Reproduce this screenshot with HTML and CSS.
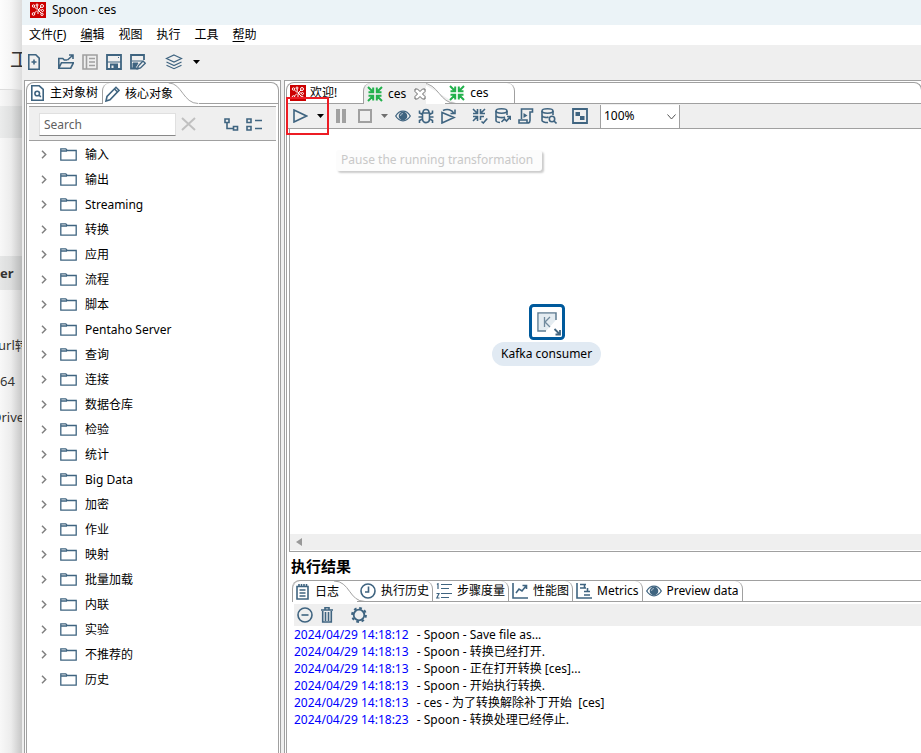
FILE: index.html
```html
<!DOCTYPE html>
<html lang="zh-CN">
<head>
  <meta charset="UTF-8">
  <meta name="viewport" content="width=device-width, initial-scale=1.0">
  <title>Spoon - ces</title>
  <link rel="stylesheet" href="styles.css">
</head>
<body>
  <!-- shared icons -->
  <svg class="sprite" aria-hidden="true">
    <symbol id="i-logo" viewBox="0 0 16 16">
      <rect width="16" height="16" fill="#cc0000"/>
      <g fill="none" stroke="#fff" stroke-width="1">
        <circle cx="3.5" cy="4" r="1.2"/><circle cx="7" cy="3" r="1"/><circle cx="12" cy="4" r="1.5"/>
        <circle cx="3.5" cy="12" r="1.3"/><circle cx="12.5" cy="8.5" r="1"/><circle cx="12" cy="12.3" r="1.2"/>
        <path d="M4.500 5L7 7.500M11 5L8 8M4.500 11L7 8.500M11.300 11.300L8 8M7.200 4v3.500M8.500 8h3M8 9v3"/>
      </g>
    </symbol>
    <symbol id="i-folder" viewBox="0 0 17 13">
      <path d="M.8 12.2V.8h5l1.5 1.700h8.900v9.700zM1 3h6" fill="none" stroke="#3f6480" stroke-width="1.3"/>
    </symbol>
    <symbol id="i-chevron" viewBox="0 0 6 9">
      <path d="M1 .8L4.7 4.5L1 8.2" fill="none" stroke="#808080" stroke-width="1.5"/>
    </symbol>
    <symbol id="i-caret" viewBox="0 0 7 4"><path d="M0 0h7L3.5 4z" fill="currentColor"/></symbol>
    <symbol id="i-arrows" viewBox="0 0 16 16">
      <path d="M1 1l5 5M15 1l-5 5M1 15l5-5M15 15l-5-5M6.2 1.5v4.7H1.5M9.8 1.5v4.7h4.7M6.2 14.5V9.8H1.5M9.8 14.5V9.8h4.7" fill="none" stroke="currentColor" stroke-width="2"/>
    </symbol>
    <symbol id="i-eye" viewBox="0 0 16 12">
      <path d="M.7 6C4.500-.4 11.500-.4 15.300 6C11.500 12.400 4.500 12.400 .7 6z" fill="none" stroke="#3f6480" stroke-width="1.3"/>
      <circle cx="8" cy="6" r="4.300" fill="#3f6480"/><path d="M5.500 6A2.500 2.500 0 0 1 8 3.500" fill="none" stroke="#a9bac8"/>
    </symbol>
  </svg>

  <div class="desktop">
    <aside class="backdrop">
      <div class="bd-title">工</div>
      <div class="bd-band"></div>
      <div class="bd-head">er</div>
      <div class="bd-line shift">url转</div>
      <div class="bd-line">64</div>
      <div class="bd-line shift-more">Drive</div>
    </aside>

    <div class="window">
      <header class="titlebar">
        <svg width="16" height="16"><use href="#i-logo"/></svg>
        <span>Spoon - ces</span>
      </header>

      <nav class="menubar">
        <button>文件(<u>F</u>)</button>
        <button><u>编</u>辑</button>
        <button>视图</button>
        <button>执行</button>
        <button>工具</button>
        <button><u>帮</u>助</button>
      </nav>

      <div class="toolbar main-tools">
        <button aria-label="New"><svg width="12" height="16" viewBox="0 0 12 16" class="line"><path d="M.8.800h7l3.400 3.400v11H.8zM6 5.500v5M3.500 8h5"/></svg></button>
        <button class="wide" aria-label="Open"><svg width="16" height="16" viewBox="0 0 16 16" class="line"><path d="M.8 14.200V4.500h4l1.500 1.500h3M.8 14.200L3.500 8.700h12l-2.800 5.500zM9.500 6l5-4.500M11 1h4v4"/></svg></button>
        <button aria-label="Explore"><svg width="16" height="16" viewBox="0 0 16 16" class="line off"><path d="M1 1h14v14H1zM4.500 1v14M7 4.500h6M7 8h6M7 11.500h6"/></svg></button>
        <button aria-label="Save"><svg width="16" height="16" viewBox="0 0 16 16"><path d="M1 1h14v14H1z" fill="none" stroke="#3f6480" stroke-width="1.800"/><path d="M4 9.500h8V15H4z" fill="#3f6480"/><path d="M5.500 11.500h2V14h-2z" fill="#efefef"/><path d="M1 8h14M12 3.500h1" stroke="#3f6480"/></svg></button>
        <button aria-label="Save as"><svg width="16" height="16" viewBox="0 0 16 16"><path d="M7 14.500H1V1h13v5" fill="none" stroke="#3f6480" stroke-width="1.800"/><path d="M3 9h5l-3 5H3zM2 7h10" fill="#3f6480" stroke="#3f6480"/><path d="M7.500 15l.7-3L13 7l2.300 2.200L10.500 14z" fill="#efefef" stroke="#3f6480" stroke-width="1.400"/></svg></button>
        <button class="layers" aria-label="Perspective"><svg width="18" height="16" viewBox="0 0 18 16" class="line thin"><path d="M9 1l7.500 3.500L9 8L1.500 4.500zM1.500 8L9 11.500L16.500 8M1.500 11.200L9 14.700l7.500-3.500"/></svg><svg width="7" height="4"><use href="#i-caret"/></svg></button>
      </div>

      <div class="workspace">
        <section class="frame side">
          <div class="panel">
            <div class="tabs" role="tablist">
              <button class="tab tree-tab" role="tab"><svg width="13" height="16" viewBox="0 0 13 16" class="line"><path d="M.8.800h7.400l4 3.500v11H.8z"/><circle cx="6.200" cy="8.500" r="2.300"/><path d="M8 10l1.800 2"/></svg>主对象树</button>
              <button class="tab active core-tab" role="tab" aria-selected="true"><svg width="15" height="16" viewBox="0 0 15 16" class="line"><path d="M1 15l1-4.500L11 1.300l3 3L5 13.700zM9.500 3l3 3"/></svg>核心对象</button>
              <svg class="swoosh" width="31" height="22" viewBox="0 0 31 22"><path d="M0 0C14 0 15 21.500 31 21.500"/></svg>
              <span class="tab-rest"></span>
            </div>
            <div class="searchbar">
              <input type="text" placeholder="Search" aria-label="Search">
              <button aria-label="Clear"><svg width="15" height="14" viewBox="0 0 15 14"><path d="M1 1l13 12M14 1L1 13" stroke="#c0c0c0" stroke-width="2"/></svg></button>
              <button class="push" aria-label="Expand all"><svg width="15" height="13" viewBox="0 0 15 13" class="line"><path d="M1 1h4v3.500H1zM9.500 8.500h4V12h-4zM3 5v5.500h6"/></svg></button>
              <button aria-label="Collapse all"><svg width="16" height="13" viewBox="0 0 16 13" class="line"><path d="M1 1h4v3.500H1zM1 8.500h4V12H1zM9 2.500h7M9 10.500h7"/></svg></button>
            </div>
            <ul class="tree">
              <li><svg width="6" height="9"><use href="#i-chevron"/></svg><svg width="17" height="13"><use href="#i-folder"/></svg>输入</li>
              <li><svg width="6" height="9"><use href="#i-chevron"/></svg><svg width="17" height="13"><use href="#i-folder"/></svg>输出</li>
              <li><svg width="6" height="9"><use href="#i-chevron"/></svg><svg width="17" height="13"><use href="#i-folder"/></svg>Streaming</li>
              <li><svg width="6" height="9"><use href="#i-chevron"/></svg><svg width="17" height="13"><use href="#i-folder"/></svg>转换</li>
              <li><svg width="6" height="9"><use href="#i-chevron"/></svg><svg width="17" height="13"><use href="#i-folder"/></svg>应用</li>
              <li><svg width="6" height="9"><use href="#i-chevron"/></svg><svg width="17" height="13"><use href="#i-folder"/></svg>流程</li>
              <li><svg width="6" height="9"><use href="#i-chevron"/></svg><svg width="17" height="13"><use href="#i-folder"/></svg>脚本</li>
              <li><svg width="6" height="9"><use href="#i-chevron"/></svg><svg width="17" height="13"><use href="#i-folder"/></svg>Pentaho Server</li>
              <li><svg width="6" height="9"><use href="#i-chevron"/></svg><svg width="17" height="13"><use href="#i-folder"/></svg>查询</li>
              <li><svg width="6" height="9"><use href="#i-chevron"/></svg><svg width="17" height="13"><use href="#i-folder"/></svg>连接</li>
              <li><svg width="6" height="9"><use href="#i-chevron"/></svg><svg width="17" height="13"><use href="#i-folder"/></svg>数据仓库</li>
              <li><svg width="6" height="9"><use href="#i-chevron"/></svg><svg width="17" height="13"><use href="#i-folder"/></svg>检验</li>
              <li><svg width="6" height="9"><use href="#i-chevron"/></svg><svg width="17" height="13"><use href="#i-folder"/></svg>统计</li>
              <li><svg width="6" height="9"><use href="#i-chevron"/></svg><svg width="17" height="13"><use href="#i-folder"/></svg>Big Data</li>
              <li><svg width="6" height="9"><use href="#i-chevron"/></svg><svg width="17" height="13"><use href="#i-folder"/></svg>加密</li>
              <li><svg width="6" height="9"><use href="#i-chevron"/></svg><svg width="17" height="13"><use href="#i-folder"/></svg>作业</li>
              <li><svg width="6" height="9"><use href="#i-chevron"/></svg><svg width="17" height="13"><use href="#i-folder"/></svg>映射</li>
              <li><svg width="6" height="9"><use href="#i-chevron"/></svg><svg width="17" height="13"><use href="#i-folder"/></svg>批量加载</li>
              <li><svg width="6" height="9"><use href="#i-chevron"/></svg><svg width="17" height="13"><use href="#i-folder"/></svg>内联</li>
              <li><svg width="6" height="9"><use href="#i-chevron"/></svg><svg width="17" height="13"><use href="#i-folder"/></svg>实验</li>
              <li><svg width="6" height="9"><use href="#i-chevron"/></svg><svg width="17" height="13"><use href="#i-folder"/></svg>不推荐的</li>
              <li><svg width="6" height="9"><use href="#i-chevron"/></svg><svg width="17" height="13"><use href="#i-folder"/></svg>历史</li>
            </ul>
          </div>
        </section>

        <section class="frame editor">
          <div class="panel">
            <div class="tabs" role="tablist">
              <button class="tab welcome-tab" role="tab"><svg width="16" height="16"><use href="#i-logo"/></svg>欢迎!</button>
              <button class="tab active file-tab" role="tab" aria-selected="true"><svg width="16" height="16" class="green"><use href="#i-arrows"/></svg>ces<svg class="close" width="12" height="12" viewBox="0 0 12 12"><path d="M1 1h2.500L6 3.500L8.500 1H11v2.500L8.500 6L11 8.500V11H8.500L6 8.500L3.500 11H1V8.500L3.500 6L1 3.500z" fill="#fff" stroke="#666"/></svg></button>
              <svg class="swoosh grey" width="36" height="22" viewBox="0 0 36 22"><path d="M0 0C18 0 18 21.500 36 21.500"/></svg>
              <button class="tab last second-file" role="tab"><svg width="16" height="16" class="green"><use href="#i-arrows"/></svg>ces</button>
              <span class="tab-rest"></span>
            </div>

            <div class="toolbar run-tools">
              <button class="run" aria-label="Run"><svg width="15" height="14" viewBox="0 0 15 14" class="line"><path d="M1 1l12.500 6L1 13z"/></svg><svg width="7" height="4"><use href="#i-caret"/></svg></button>
              <button aria-label="Pause"><svg width="10" height="14" viewBox="0 0 10 14"><path d="M0 0h4v14H0zM6 0h4v14H6z" fill="#a0a0a0"/></svg></button>
              <button class="stop" aria-label="Stop"><svg width="14" height="14" viewBox="0 0 14 14"><path d="M1 1h12v12H1z" fill="none" stroke="#a0a0a0" stroke-width="2"/></svg><svg width="7" height="4"><use href="#i-caret"/></svg></button>
              <button aria-label="Preview"><svg width="16" height="12"><use href="#i-eye"/></svg></button>
              <button aria-label="Debug"><svg width="16" height="16" viewBox="0 0 16 16" class="line"><path d="M5 4.500C5 .500 11 .500 11 4.500M4.500 5h7v5.500c0 5.500-7 5.500-7 0zM1.500 2.500v2.500l3 1.500M14.500 2.500V5l-3 1.500M.5 9h4M11.500 9h4M1.500 15v-2.500l3-1.500M14.500 15v-2.500l-3-1.500"/></svg></button>
              <button aria-label="Replay"><svg width="16" height="16" viewBox="0 0 16 16" class="line"><path d="M1 4.500L13 9.500L1 15zM2 2.500c4-2 9-1 11 3M9.500 5.500H14V1.500"/></svg></button>
              <button class="verify" aria-label="Verify"><svg width="16" height="16" viewBox="0 0 16 16" class="line"><path d="M1 1l4 4M13 1L9 5M1 13l4-4M5.500 1v4.500H1M8.500 1v4.500H13M5.500 13V8.500H1M8.500 12V8.500H12M9.500 13.500l1.800 1.500l4-4.500"/></svg></button>
              <button aria-label="Impact"><svg width="16" height="16" viewBox="0 0 16 16" class="line"><ellipse cx="6.500" cy="3" rx="5.500" ry="2.200"/><path d="M1 3v9.500c0 1 2 2 4 2M12 3v4M1 7.500c1 2.500 7 2.500 9 1.500M6.500 14l3-3l2 2l3.500-4M12 8.500h3.500V12"/></svg></button>
              <button aria-label="SQL"><svg width="16" height="16" viewBox="0 0 16 16" class="line"><path d="M3.500 11V1h11v3h-2.500v8.500c0 3-3 2.500-3 2.500H1v-3h8v3"/><path d="M5.500 5l4 2.500l-4 2.500z" fill="#3f6480" stroke="none"/></svg></button>
              <button aria-label="Explore database"><svg width="16" height="16" viewBox="0 0 16 16" class="line"><ellipse cx="6.500" cy="3" rx="5.500" ry="2.200"/><path d="M1 3v9.500c0 1 3 2.200 6 2M12 3v4M1 7.500c1 2.200 5 2.200 6.500 1.500"/><circle cx="11" cy="11" r="2.700"/><path d="M13 13l2.500 2.500"/></svg></button>
              <button class="results" aria-label="Show results"><svg width="16" height="16" viewBox="0 0 16 16"><path d="M1 1h14v14H1z" fill="none" stroke="#3f6480" stroke-width="1.800"/><path d="M3.500 4H8v4H3.500zM8 8h4.500v4H8z" fill="#3f6480"/></svg></button>
              <div class="zoom">
                <select aria-label="Zoom"><option>100%</option><option>75%</option><option>50%</option></select>
                <svg width="9" height="6" viewBox="0 0 9 6"><path d="M.5.500l4 4.500l4-4.500" fill="none" stroke="#555"/></svg>
              </div>
            </div>

            <div class="canvas">
              <div class="step">
                <svg width="36" height="36" viewBox="0 0 36 36"><rect x="1.500" y="1.500" width="33" height="33" rx="3" fill="#fff" stroke="#005a9c" stroke-width="3"/><path d="M27 16V9H9v18h8" fill="#e4ecf1" stroke="#607d92" stroke-width="1.500"/><path d="M9.800 26.200V9.800h16.400z" fill="#e4ecf1"/><path d="M15.500 13v10M21 13l-5 5l5 5" fill="none" stroke="#718b9e" stroke-width="1.300"/><path d="M25.500 25l5 5M31 26v4.500h-4.500" fill="none" stroke="#446680" stroke-width="1.800"/></svg>
                <span>Kafka consumer</span>
              </div>
              <div class="tooltip" role="tooltip">Pause the running transformation</div>
              <div class="scrollbar"><svg width="6" height="8" viewBox="0 0 6 8"><path d="M6 0v8L0 4z" fill="#999"/></svg></div>
            </div>

            <h2>执行结果</h2>
            <div class="log-panel">
              <div class="tabs" role="tablist">
                <button class="tab active log-tab" role="tab" aria-selected="true"><svg width="13" height="16" viewBox="0 0 13 16" class="line"><path d="M1 2.500h11V15H1zM3 0v3M5.500 0v3M8 0v3M10.500 0v3M3.500 6h6M3.500 9h6M3.500 12h6"/></svg>日志</button>
                <svg class="swoosh" width="31" height="21" viewBox="0 0 31 21"><path d="M0 0C16 0 15 20.500 31 20.500"/></svg>
                <button class="tab last history-tab" role="tab"><svg width="16" height="16" viewBox="0 0 16 16" class="line"><circle cx="8" cy="8" r="7"/><path d="M8.500 3.500V9H5"/></svg>执行历史</button>
                <button class="tab last" role="tab"><svg width="16" height="16" viewBox="0 0 16 16" class="line thin"><path d="M1 1.500l1-.8V6M.5 10.500h2.500L.8 15H3.500M5 1.500h11M5 5.500h8M5 10.500h11M5 14.500h8"/></svg>步骤度量</button>
                <button class="tab last" role="tab"><svg width="16" height="16" viewBox="0 0 16 16" class="line"><path d="M1 0v15h15M4 10l3-4l3 2l4-5M10.500 2.500h4V6"/></svg>性能图</button>
                <button class="tab last" role="tab"><svg width="16" height="16" viewBox="0 0 16 16" class="line"><path d="M1 0v15h15M4 1.500h6M4 5h6M8 8.500h6M8 12h6M8.500 1.500V5M11.500 5v3.500"/></svg>Metrics</button>
                <button class="tab last" role="tab"><svg width="16" height="12"><use href="#i-eye"/></svg>Preview data</button>
                <span class="tab-rest"></span>
              </div>
              <div class="toolbar log-tools">
                <button aria-label="Show error lines"><svg width="16" height="16" viewBox="0 0 16 16" class="line"><circle cx="8" cy="8" r="7"/><path d="M4.500 8h7"/></svg></button>
                <button aria-label="Clear log"><svg width="12" height="16" viewBox="0 0 12 16" class="line"><path d="M0 3h12M4 2.500V.8h4v1.700M1.700 4v11h8.600V4M4.500 5v9M7.500 5v9"/></svg></button>
                <button class="settings" aria-label="Log settings"><svg width="16" height="16" viewBox="0 0 16 16"><circle cx="8" cy="8" r="5.300" fill="none" stroke="#3f6480" stroke-width="1.800"/><circle cx="8" cy="8" r="6.900" fill="none" stroke="#3f6480" stroke-width="2" stroke-dasharray="2.710"/></svg></button>
              </div>
              <div class="log">
                <p><time>2024/04/29 14:18:12</time> - Spoon - Save file as...</p>
                <p><time>2024/04/29 14:18:13</time> - Spoon - 转换已经打开.</p>
                <p><time>2024/04/29 14:18:13</time> - Spoon - 正在打开转换 [ces]...</p>
                <p><time>2024/04/29 14:18:13</time> - Spoon - 开始执行转换.</p>
                <p><time>2024/04/29 14:18:13</time> - ces - 为了转换解除补丁开始&nbsp; [ces]</p>
                <p><time>2024/04/29 14:18:23</time> - Spoon - 转换处理已经停止.</p>
              </div>
            </div>
          </div>
        </section>
      </div>
    </div>
  </div>
</body>
</html>
```
FILE: styles.css
```css
* {
  box-sizing: border-box;
}
body {
  margin: 0;
  font-family: "Noto Sans", "Noto Sans CJK SC", sans-serif;
  font-size: 12px;
  line-height: 16px;
  color: #000;
  background-color: #fff;
}
button {
  display: flex;
  align-items: center;
  padding: 0;
  border: none;
  background: none;
  font: inherit;
  color: inherit;
  white-space: nowrap;
}
svg {
  display: block;
  flex: none;
}
.sprite {
  position: absolute;
  width: 0;
  height: 0;
}
.line {
  fill: none;
  stroke: #3f6480;
  stroke-width: 1.6;
}
.line.thin {
  stroke-width: 1.2;
}
.line.off {
  stroke: #a0a0a0;
}
.green {
  color: #22b14c;
}
.desktop {
  display: flex;
  min-height: 100vh;
  overflow: hidden;
}

/* page behind the window */
.backdrop {
  flex: none;
  width: 22px;
  overflow: hidden;
  background: linear-gradient(to right, #f8f8f8, #ececec 50%, #c6c6c6);
  color: #333;
  white-space: nowrap;
}
.bd-title {
  height: 90px;
  padding: 46px 0 0 10px;
  border-bottom: 1px solid #ddd;
  background: linear-gradient(to right, #fdfdfd, #f5f5f5 50%, #dcdcdc);
  font-family: "Noto Sans CJK SC", sans-serif;
  font-size: 20px;
  line-height: 26px;
}
.bd-band {
  height: 32px;
  margin: 16px 0 118px;
  background: rgba(0, 20, 10, 0.05);
}
.bd-head {
  height: 34px;
  margin-bottom: 37px;
  background: rgba(0, 20, 10, 0.07);
  font-size: 13px;
  font-weight: bold;
  line-height: 34px;
}
.bd-line {
  height: 36px;
  font-size: 13px;
  line-height: 36px;
}
.shift {
  margin-left: -2px;
}
.shift-more {
  margin-left: -8px;
}

.window {
  display: flex;
  flex: 1;
  flex-direction: column;
  min-width: 0;
  background-color: #efefef;
}
.titlebar {
  display: flex;
  align-items: center;
  gap: 6px;
  height: 25px;
  padding: 0 8px 6px;
  background-color: #ebf3f7;
}
.menubar {
  display: flex;
  gap: 14px;
  height: 20px;
  padding-left: 7px;
  background-color: #fff;
}
.menubar u {
  text-underline-offset: 2px;
}
.toolbar {
  display: flex;
  align-items: center;
  gap: 8px;
  background-color: #efefef;
}
.main-tools {
  height: 35px;
  padding: 0 0 2px 6px;
}
.main-tools .wide {
  margin-left: 10px;
}
.layers {
  gap: 10px;
  margin-left: 11px;
}

.workspace {
  display: flex;
  flex: 1;
  gap: 3px;
  padding-left: 2px;
}
.frame {
  display: flex;
  border: 1px solid #a0a0a0;
  border-bottom: none;
  padding: 1px 1px 0;
  background-color: #fff;
}
.side {
  flex: none;
  width: 257px;
}
.editor {
  flex: 1;
  min-width: 0;
  margin-right: -3px;
}
.panel {
  flex: 1;
  min-width: 0;
  border: 1px solid #a0a0a0;
  border-bottom: none;
  border-radius: 8px 8px 0 0;
}

/* tabs */
.tabs {
  display: flex;
  height: 21px;
}
.tab {
  gap: 6px;
  padding: 0 4px;
  border-bottom: 1px solid #a0a0a0;
}
.tab.active {
  z-index: 1;
  border-bottom: none;
  border-left: 1px solid #a0a0a0;
  border-radius: 8px 0 0 0;
  padding-right: 0;
}
.tab.last {
  border-right: 1px solid #a0a0a0;
  border-radius: 0 8px 0 0;
}
.tab-rest {
  flex: 1;
  border-bottom: 1px solid #a0a0a0;
}
.swoosh {
  height: 21px;
  margin-left: -5px;
  fill: #fff;
  stroke: #a0a0a0;
}
.tab.core-tab {
  gap: 5px;
  padding-left: 2px;
}

.searchbar {
  display: flex;
  align-items: center;
  gap: 5px;
  height: 35px;
  margin: 2px 2px 0;
  padding: 1px 14px 0 10px;
  border-top: 1px solid #a0a0a0;
  border-bottom: 1px solid #a0a0a0;
  background-color: #efefef;
}
.searchbar input {
  width: 137px;
  height: 23px;
  padding: 0 4px;
  border: 1px solid #e0e0e0;
  border-bottom-color: #888;
  font: inherit;
}
.searchbar input::placeholder {
  color: #606060;
}
.searchbar .push {
  margin: 0 2px 0 auto;
}
.tree {
  margin: 0;
  padding: 1px 0 0 14px;
  list-style: none;
}
.tree li {
  display: flex;
  align-items: center;
  height: 25px;
}
.tree li svg + svg {
  margin: 0 8px 0 13px;
}

/* editor */
.welcome-tab {
  width: 76px;
  gap: 4px;
  padding-left: 3px;
}
.file-tab {
  padding-left: 3px;
  gap: 5px;
  background-color: #efefef;
}
.file-tab .close {
  margin-left: 3px;
}
.swoosh.grey {
  fill: #efefef;
}
.second-file {
  width: 70px;
  margin-left: -12px;
  gap: 5px;
}
.run-tools {
  height: 25px;
  gap: 7px;
  border-bottom: 1px solid #a0a0a0;
}
.run {
  gap: 9px;
  width: 43px;
  height: 38px;
  margin: -7px 0 -7px -1px;
  padding-left: 5px;
  border: 2px solid #ed1c24;
  z-index: 2;
}
.stop {
  gap: 9px;
  margin-left: 5px;
  color: #707070;
}
.verify {
  margin-left: 8px;
}
.results {
  margin-left: 8px;
}
.zoom {
  position: relative;
  margin-left: 5px;
}
.zoom select {
  appearance: none;
  width: 80px;
  height: 23px;
  padding: 0 3px;
  border: 1px solid #a0a0a0;
  border-width: 0 1px;
  border-radius: 0;
  background-color: #fff;
  font: inherit;
  color: #000;
}
.zoom svg {
  position: absolute;
  top: 9px;
  right: 4px;
  pointer-events: none;
}
.canvas {
  position: relative;
  display: flex;
  flex-direction: column;
  justify-content: flex-end;
  height: 423px;
  margin-left: 2px;
  border-left: 1px solid #a0a0a0;
  border-bottom: 1px solid #a0a0a0;
}
.step {
  position: absolute;
  top: 175px;
  left: 202px;
  display: flex;
  flex-direction: column;
  align-items: center;
  gap: 2px;
}
.step span {
  padding: 4px 9px;
  border-radius: 12px;
  background-color: #e1eaf3;
}
.tooltip {
  position: absolute;
  top: 21px;
  left: 46px;
  padding: 2px 9px 3px 5px;
  border-radius: 3px;
  background-color: #fcfcfc;
  box-shadow: 2px 2px 2px #ccc;
  color: #c8c8c8;
}
.scrollbar {
  display: flex;
  align-items: center;
  height: 16px;
  margin-bottom: 1px;
  padding-left: 6px;
  background-color: #efefef;
}
h2 {
  margin: 0;
  padding: 4px 0 4px 4px;
  font-size: 15px;
  line-height: 20px;
}
.log-panel {
  margin-left: 5px;
  border: 1px solid #a0a0a0;
  border-width: 1px 0 0;
  border-radius: 8px 0 0 0;
}
.log-panel .tab {
  gap: 5px;
  padding: 0 3px;
}
.log-panel .log-tab {
  gap: 6px;
  padding-right: 0;
}
.log-panel .history-tab {
  margin-left: -8px;
}
.log-tools {
  height: 22px;
  margin: 2px 0 0 2px;
  padding-left: 3px;
}
.log-tools .settings {
  margin-left: 10px;
}
.log {
  padding: 0 0 0 2px;
}
.log p {
  margin: 0;
  line-height: 17px;
  white-space: nowrap;
}
.log time {
  margin-right: 5px;
  color: #0000ff;
}
```
